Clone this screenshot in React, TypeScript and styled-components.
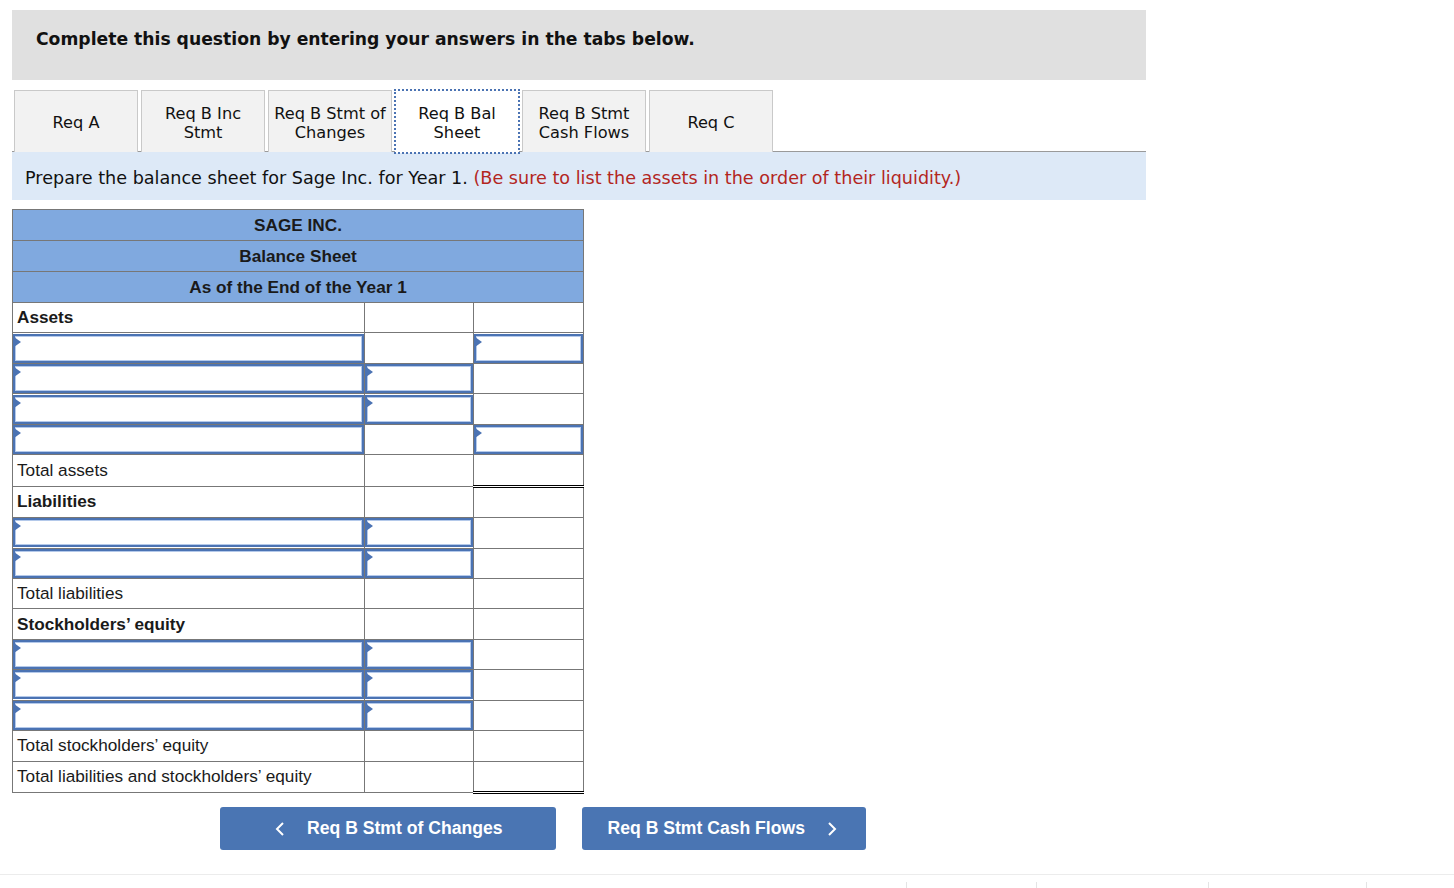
import React from 'react';
import styled, { createGlobalStyle } from 'styled-components';

const GlobalStyle = createGlobalStyle`
  body {
    margin: 0;
    background: #ffffff;
    font-family: 'DejaVu Sans', Verdana, sans-serif;
    color: #000;
  }
`;

type Kind = 'label' | 'bold' | 'input' | 'blank';

interface Cell {
  kind: Kind;
  under?: boolean;
  double?: boolean;
}

interface Row {
  text?: string;
  cells: [Cell, Cell, Cell];
}

const blank: Cell = { kind: 'blank' };
const inp: Cell = { kind: 'input' };
const sumLine: Cell = { kind: 'blank', under: true };
const grandTotal: Cell = { kind: 'blank', under: true, double: true };

const rows: Row[] = [
  { text: 'Assets', cells: [{ kind: 'bold' }, blank, blank] },
  { cells: [inp, blank, inp] },
  { cells: [inp, inp, blank] },
  { cells: [inp, inp, blank] },
  { cells: [inp, sumLine, inp] },
  { text: 'Total assets', cells: [{ kind: 'label' }, blank, grandTotal] },
  { text: 'Liabilities', cells: [{ kind: 'bold' }, blank, blank] },
  { cells: [inp, inp, blank] },
  { cells: [inp, inp, blank] },
  { text: 'Total liabilities', cells: [{ kind: 'label' }, sumLine, blank] },
  { text: 'Stockholders’ equity', cells: [{ kind: 'bold' }, blank, blank] },
  { cells: [inp, inp, blank] },
  { cells: [inp, inp, blank] },
  { cells: [inp, inp, blank] },
  { text: 'Total stockholders’ equity', cells: [{ kind: 'label' }, sumLine, blank] },
  { text: 'Total liabilities and stockholders’ equity', cells: [{ kind: 'label' }, blank, grandTotal] },
];

const tabs = [
  { label: ['Req A'] },
  { label: ['Req B Inc', 'Stmt'] },
  { label: ['Req B Stmt of', 'Changes'] },
  { label: ['Req B Bal', 'Sheet'], active: true },
  { label: ['Req B Stmt', 'Cash Flows'] },
  { label: ['Req C'] },
];

const ChevronLeft = () => (
  <svg width="10" height="16" viewBox="0 0 10 16">
    <path d="M8 2 L2 8 L8 14" fill="none" stroke="#fff" strokeWidth="2" />
  </svg>
);

const ChevronRight = () => (
  <svg width="10" height="16" viewBox="0 0 10 16">
    <path d="M2 2 L8 8 L2 14" fill="none" stroke="#fff" strokeWidth="2" />
  </svg>
);

const App = () => (
  <Page>
    <GlobalStyle />
    <Banner>Complete this question by entering your answers in the tabs below.</Banner>

    <TabStrip>
      {tabs.map((t, i) => (
        <Tab key={i} $active={!!t.active}>
          {t.label.map((l, j) => (
            <span key={j}>{l}</span>
          ))}
        </Tab>
      ))}
    </TabStrip>

    <Instruction>
      Prepare the balance sheet for Sage Inc. for Year 1.{' '}
      <Hint>(Be sure to list the assets in the order of their liquidity.)</Hint>
    </Instruction>

    <Sheet>
      <colgroup>
        <col style={{ width: 352 }} />
        <col style={{ width: 109 }} />
        <col style={{ width: 110 }} />
      </colgroup>
      <tbody>
        <tr>
          <HeadCell colSpan={3}>SAGE INC.</HeadCell>
        </tr>
        <tr>
          <HeadCell colSpan={3}>Balance Sheet</HeadCell>
        </tr>
        <tr>
          <HeadCell colSpan={3}>As of the End of the Year 1</HeadCell>
        </tr>
        {rows.map((r, i) => (
          <tr key={i}>
            {r.cells.map((c, j) => (
              <BodyCell key={j} $under={!!c.under} $double={!!c.double} $bold={c.kind === 'bold'}>
                {c.kind === 'input' ? <Entry /> : j === 0 && r.text ? <Label>{r.text}</Label> : null}
              </BodyCell>
            ))}
          </tr>
        ))}
      </tbody>
    </Sheet>

    <NavRow>
      <NavButton $dir="prev">
        <ChevronLeft />
        Req B Stmt of Changes
      </NavButton>
      <NavButton $dir="next">
        Req B Stmt Cash Flows
        <ChevronRight />
      </NavButton>
    </NavRow>

    <Footer>
      <Tick />
      <Tick />
      <Tick />
      <Tick />
    </Footer>
  </Page>
);

const Page = styled.div`
  width: 1454px;
  padding-top: 10px;
`;

const Banner = styled.div`
  margin-left: 12px;
  width: 1134px;
  height: 70px;
  box-sizing: border-box;
  background: #e0e0e0;
  padding: 19px 0 0 24px;
  font-family: 'DejaVu Sans', Verdana, sans-serif;
  font-weight: 700;
  font-size: 17.2px;
  color: #111;
`;

const TabStrip = styled.div`
  margin: 10px 0 0 12px;
  width: 1134px;
  height: 62px;
  padding-left: 2px;
  box-sizing: border-box;
  display: flex;
  gap: 3px;
  border-bottom: 1px solid #9a9a9a;
`;

const Tab = styled.div<{ $active: boolean }>`
  width: 124px;
  height: ${p => (p.$active ? '63px' : '62px')};
  box-sizing: border-box;
  display: flex;
  flex-direction: column;
  justify-content: center;
  align-items: center;
  background: ${p => (p.$active ? '#ffffff' : '#f2f2f2')};
  border: 1px solid ${p => (p.$active ? '#ffffff' : '#c9c9c9')};
  border-bottom: none;
  outline: ${p => (p.$active ? '2px dotted #4b73b3' : 'none')};
  outline-offset: -1px;
  padding-top: 2px;
  font-family: 'DejaVu Sans', Verdana, sans-serif;
  font-size: 16.2px;
  line-height: 19px;
  color: #111;
  z-index: ${p => (p.$active ? 1 : 0)};
`;

const Instruction = styled.div`
  margin-left: 12px;
  width: 1134px;
  height: 48px;
  box-sizing: border-box;
  background: #dde9f7;
  padding: 16px 0 0 13px;
  font-family: 'DejaVu Sans', Verdana, sans-serif;
  font-size: 17.6px;
  color: #111;
`;

const Hint = styled.span`
  color: #b3261e;
`;

const Sheet = styled.table`
  margin: 9px 0 0 12px;
  width: 572px;
  border-collapse: collapse;
  font-family: 'Liberation Sans', Arial, sans-serif;
  font-size: 17.2px;
  color: #1a1a1a;
  table-layout: fixed;
`;

const HeadCell = styled.td`
  height: 30px;
  padding: 0;
  background: #80a9df;
  border: 1px solid #777;
  text-align: center;
  font-weight: 700;
  vertical-align: middle;
`;

const BodyCell = styled.td<{ $under: boolean; $double: boolean; $bold: boolean }>`
  height: 29.45px;
  padding: 0;
  border: 1px solid #777;
  border-top: 1px solid ${p => (p.$under ? '#000' : '#777')};
  border-bottom: ${p => (p.$double ? '3px double #000' : '1px solid #777')};
  font-weight: ${p => (p.$bold ? 700 : 400)};
  vertical-align: middle;
`;

const Label = styled.div`
  padding-left: 4px;
  white-space: nowrap;
`;

const Entry = styled.div`
  position: relative;
  height: 29px;
  box-sizing: border-box;
  border: 2px solid #4b73b3;
  box-shadow: inset 0 0 0 1px #b4c9ea;
  background: #fff;

  &::before {
    content: '';
    position: absolute;
    left: -1px;
    top: 1px;
    border-left: 7px solid #4b73b3;
    border-top: 5px solid transparent;
    border-bottom: 5px solid transparent;
  }
`;

const NavRow = styled.div`
  display: flex;
  gap: 26px;
  padding: 13px 0 0 220px;
`;

const NavButton = styled.button<{ $dir: 'prev' | 'next' }>`
  height: 43px;
  display: flex;
  align-items: center;
  gap: 22px;
  padding: ${p => (p.$dir === 'prev' ? '0 53px 0 55px' : '0 29px 0 26px')};
  border: none;
  border-radius: 3px;
  background: #4a75b3;
  color: #fff;
  font-family: 'Liberation Sans', Arial, sans-serif;
  font-weight: 700;
  font-size: 17.6px;
  cursor: pointer;
`;

const Footer = styled.div`
  margin-top: 24px;
  height: 14px;
  border-top: 1px solid #ececec;
  display: flex;
  padding-left: 906px;

  & > :nth-child(2) {
    margin-left: 129px;
  }
  & > :nth-child(3) {
    margin-left: 171px;
  }
  & > :nth-child(4) {
    margin-left: 157px;
  }
`;

const Tick = styled.div`
  width: 1px;
  height: 7px;
  margin-top: 7px;
  background: #e4e4e4;
`;

export default App;
